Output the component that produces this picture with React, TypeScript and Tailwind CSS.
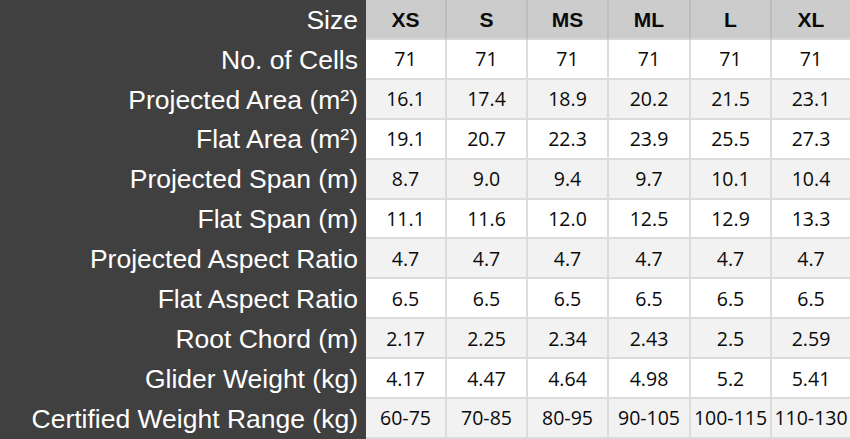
import React from "react";

const sizes = ["XS", "S", "MS", "ML", "L", "XL"];
const rows: { label: React.ReactNode; values: string[] }[] = [
  { label: "No. of Cells", values: ["71", "71", "71", "71", "71", "71"] },
  { label: "Projected Area (m²)", values: ["16.1", "17.4", "18.9", "20.2", "21.5", "23.1"] },
  { label: "Flat Area (m²)", values: ["19.1", "20.7", "22.3", "23.9", "25.5", "27.3"] },
  { label: "Projected Span (m)", values: ["8.7", "9.0", "9.4", "9.7", "10.1", "10.4"] },
  { label: "Flat Span (m)", values: ["11.1", "11.6", "12.0", "12.5", "12.9", "13.3"] },
  { label: "Projected Aspect Ratio", values: ["4.7", "4.7", "4.7", "4.7", "4.7", "4.7"] },
  { label: "Flat Aspect Ratio", values: ["6.5", "6.5", "6.5", "6.5", "6.5", "6.5"] },
  { label: "Root Chord (m)", values: ["2.17", "2.25", "2.34", "2.43", "2.5", "2.59"] },
  { label: "Glider Weight (kg)", values: ["4.17", "4.47", "4.64", "4.98", "5.2", "5.41"] },
  { label: "Certified Weight Range (kg)", values: ["60-75", "70-85", "80-95", "90-105", "100-115", "110-130"] },
];

const labelCls =
  "bg-[#404040] text-white text-[26.5px] leading-none flex items-center justify-end pr-[8px] whitespace-nowrap [font-family:'Liberation_Sans',Arial,sans-serif]";

export default function App() {
  return (
    <div className="w-[850px] h-[439px] overflow-hidden bg-white">
      <div className="grid grid-cols-[366px_79px_81px_81px_82px_81px_80px] grid-rows-[repeat(11,1fr)] h-[439px]">
        <div className={labelCls}>Size</div>
        {sizes.map((s, i) => (
          <div
            key={s}
            className={`bg-[#cccccc] flex items-center justify-center pt-[2px] text-[21px] font-bold text-[#0a0a0a] [font-family:'Liberation_Sans',Arial,sans-serif] border-b-2 border-[#d6d6d6] ${i > 0 ? "border-l-2 border-l-[#bdbdbd]" : ""}`}
          >
            {s}
          </div>
        ))}
        {rows.map((r, ri) => (
          <React.Fragment key={ri}>
            <div className={labelCls}>{r.label}</div>
            {r.values.map((v, ci) => (
              <div
                key={ci}
                className={`${ri % 2 === 0 ? "bg-white" : "bg-[#f2f2f2]"} flex items-center justify-center text-[19.5px] text-[#0a0a0a] [font-family:'Open_Sans',sans-serif] border-b-2 border-[#dcdcdc] ${ci > 0 ? "border-l-2" : ""}`}
              >
                {v}
              </div>
            ))}
          </React.Fragment>
        ))}
      </div>
    </div>
  );
}
